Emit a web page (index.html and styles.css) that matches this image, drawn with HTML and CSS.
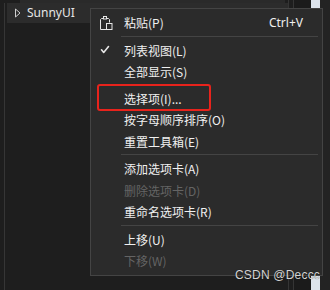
FILE: index.html
```html
<!DOCTYPE html>
<html lang="zh">
<head>
<meta charset="utf-8">
<link rel="stylesheet" href="styles.css">
</head>
<body>
<div class="scene">
  <div class="main">
    <div class="topbar"></div>
    <div class="tree">
      <div class="node">
        <svg class="twisty" width="8" height="10" viewBox="0 0 8 10"><path d="M1.5 1 L6 5 L1.5 9 Z" fill="none" stroke="#cfcfcf" stroke-width="1"/></svg>
        <span class="node-label">SunnyUI</span>
      </div>
    </div>
  </div>
  <div class="vline"></div>
  <div class="gap-a"></div>
  <div class="vline"></div>
  <div class="gap-b"></div>
  <div class="scroll-strip"></div>
  <div class="gap-c"></div>
</div>

<div class="menu">
  <div class="item">
    <span class="ico">
      <svg width="16" height="16" viewBox="0 0 16 16" fill="none" stroke="#e6e6e6" stroke-width="1">
        <path d="M12.5 7.5 V4.5 L11.5 3.5 H10 M6 3.5 H4.5 L3.5 4.5 V14.5 H9"/>
        <rect x="6.5" y="1.5" width="3" height="2.5"/>
        <rect x="9.5" y="8.5" width="5.5" height="6"/>
      </svg>
    </span>
    <span class="label">粘贴(P)</span>
    <span class="key">Ctrl+V</span>
  </div>
  <div class="sep"></div>
  <div class="item">
    <span class="ico">
      <svg width="16" height="16" viewBox="0 0 16 16" fill="none" stroke="#e6e6e6" stroke-width="1.6" stroke-linecap="round" stroke-linejoin="round">
        <path d="M4.5 7.8 L6.7 10.5 L11.5 4.6"/>
      </svg>
    </span>
    <span class="label">列表视图(L)</span>
  </div>
  <div class="item"><span class="ico"></span><span class="label">全部显示(S)</span></div>
  <div class="item item-gap"><span class="ico"></span><span class="label">选择项(I)...</span></div>
  <div class="item"><span class="ico"></span><span class="label">按字母顺序排序(O)</span></div>
  <div class="item"><span class="ico"></span><span class="label">重置工具箱(E)</span></div>
  <div class="sep"></div>
  <div class="item"><span class="ico"></span><span class="label">添加选项卡(A)</span></div>
  <div class="item disabled"><span class="ico"></span><span class="label">删除选项卡(D)</span></div>
  <div class="item"><span class="ico"></span><span class="label">重命名选项卡(R)</span></div>
  <div class="sep"></div>
  <div class="item"><span class="ico"></span><span class="label">上移(U)</span></div>
  <div class="item disabled"><span class="ico"></span><span class="label">下移(W)</span></div>
</div>

<div class="highlight-box"></div>
<div class="watermark">CSDN @Deccc</div>
</body>
</html>
```

FILE: styles.css
```css
html, body {
  margin: 0;
  padding: 0;
}

body {
  width: 330px;
  height: 290px;
  overflow: hidden;
  background: #1e1e1e;
  position: relative;
  font-family: "Noto Sans CJK SC", "Noto Sans", sans-serif;
}

.scene {
  display: flex;
  height: 290px;
}

.main {
  width: 288px;
  display: flex;
  flex-direction: column;
}

.topbar {
  height: 3px;
  margin-left: 20px;
  margin-right: 3px;
  background: #2a2a2a;
}

.tree {
  flex: 1;
  margin-left: 4px;
  border-left: 1px solid #363636;
  padding-left: 2px;
}

.node {
  height: 20px;
  background: #2c2c2c;
  display: flex;
  align-items: center;
  padding-left: 7px;
  gap: 5px;
}

.twisty {
  display: block;
}

.node-label {
  font-family: "Noto Sans", "Open Sans", sans-serif;
  font-size: 12px;
  color: #e6e6e6;
  line-height: 20px;
}

.vline {
  width: 1px;
  background: #353535;
}

.gap-a {
  width: 4px;
}

.gap-b {
  width: 17px;
  background: #1b1b1b;
}

.scroll-strip {
  width: 9px;
  background: #dde4ec;
}

.gap-c {
  flex: 1;
  background: #232323;
}

.menu {
  position: absolute;
  left: 90px;
  top: 8px;
  width: 231px;
  height: 266px;
  box-sizing: content-box;
  background: #2b2b2b;
  border: 1px solid #444444;
  padding: 3px 0 0 0;
  box-sizing: border-box;
  width: 233px;
  height: 268px;
}

.item {
  height: 21.5px;
  display: flex;
  align-items: center;
  color: #f0f0f0;
  font-size: 12px;
  line-height: 21.5px;
}

.item-gap {
  margin-top: 5px;
}

.item.disabled {
  color: #646464;
}

.ico {
  width: 33px;
  flex: none;
  display: flex;
  align-items: center;
  padding-left: 6px;
  box-sizing: border-box;
}

.ico svg {
  display: block;
}

.label {
  flex: 1;
  white-space: nowrap;
}

.key {
  padding-right: 19px;
  font-family: "Noto Sans", "Open Sans", sans-serif;
  font-size: 12px;
}

.sep {
  height: 1px;
  background: #444444;
  margin: 2px 4px 3px 30px;
}

.highlight-box {
  position: absolute;
  left: 97px;
  top: 84px;
  width: 114px;
  height: 27px;
  box-sizing: border-box;
  border: 2px solid #e8231c;
  border-radius: 3px;
}

.watermark {
  position: absolute;
  left: 235px;
  top: 267px;
  font-family: "Liberation Sans", Arial, sans-serif;
  font-size: 12px;
  color: #d4d4d4;
  letter-spacing: 0.2px;
  line-height: 16px;
  text-shadow: 0 0 1px rgba(0,0,0,0.6);
  white-space: nowrap;
}
```
